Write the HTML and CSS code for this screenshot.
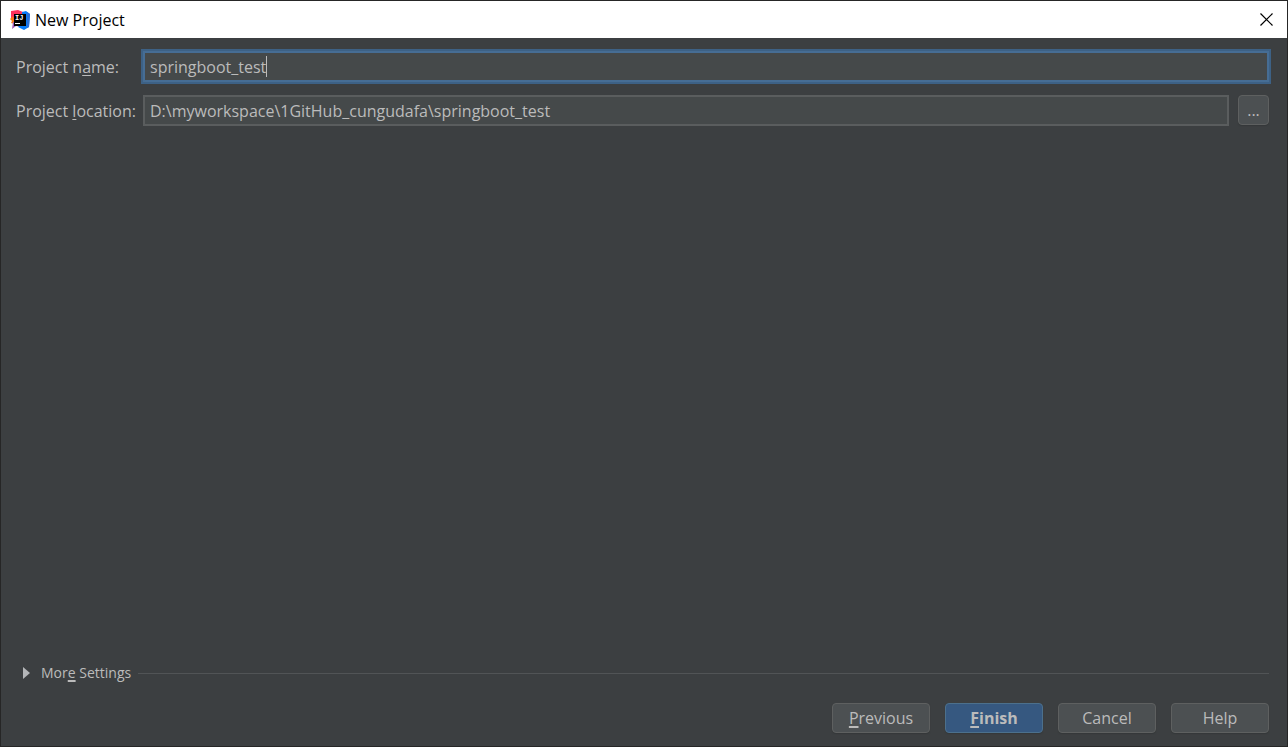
FILE: index.html
```html
<!DOCTYPE html>
<html lang="en">
<head>
<meta charset="utf-8">
<title>New Project</title>
<link rel="stylesheet" href="styles.css">
</head>
<body>
<main class="dialog">
  <header class="titlebar">
    <svg class="logo" viewBox="0 0 20 20" aria-hidden="true">
      <path d="M1 1L8 0L13 2L11 8L3 12L1 8Z" fill="#fe315d"/>
      <path d="M0 9L3 6L5 14L1 13L2 11Z" fill="#f97a12"/>
      <path d="M3 12L10 11L11 17L6 16L2 19Z" fill="#a05bb5"/>
      <path d="M12 2L16 1L20 4L19 17L14 20L8 17L12 12Z" fill="#087cfa"/>
      <path d="M17 2L20 4L19 17L17 18Z" fill="#2a6fd8"/>
      <rect x="4" y="4" width="12" height="12" fill="#000"/>
      <text class="logo-text" x="5" y="10">IJ</text>
      <rect x="5" y="13" width="5" height="1" fill="#fff"/>
    </svg>
    <h1 class="title">New Project</h1>
    <button class="close" type="button" aria-label="Close">
      <svg class="close-icon" viewBox="0 0 13 13" aria-hidden="true"><path d="M.5.5L12.5 12.5M12.5.5L.5 12.5" stroke="#000" stroke-width="1.2" fill="none"/></svg>
    </button>
  </header>
  <form class="content">
    <div class="fields">
      <label for="name">Project n<u>a</u>me:</label>
      <div class="name-wrap">
        <input class="field field-active" id="name" type="text" value="springboot_test" spellcheck="false">
        <span class="caret"></span>
      </div>
      <label for="location">Project <u>l</u>ocation:</label>
      <div class="location-row">
        <input class="field" id="location" type="text" value="D:\myworkspace\1GitHub_cungudafa\springboot_test" spellcheck="false">
        <button class="button browse" type="button" aria-label="Browse">...</button>
      </div>
    </div>
    <div class="more">
      <button class="more-toggle" type="button" aria-expanded="false">
        <svg class="arrow" viewBox="0 0 7 12" aria-hidden="true"><path d="M0 0L7 6L0 12Z" fill="#b4b6b8"/></svg>
        <span>Mor<u>e</u> Settings</span>
      </button>
      <span class="rule"></span>
    </div>
    <footer class="actions">
      <button class="button action" type="button"><span><u>P</u>revious</span></button>
      <button class="button action primary" type="submit"><span><u>F</u>inish</span></button>
      <button class="button action" type="button">Cancel</button>
      <button class="button action" type="button">Help</button>
    </footer>
  </form>
</main>
</body>
</html>
```
FILE: styles.css
```css
* { box-sizing: border-box; }
body {
  margin: 0;
  background: #3c3f41;
  color: #bbbbbb;
  font: 16px/20px "Open Sans", "Noto Sans", sans-serif;
}
button, input { font: inherit; color: inherit; margin: 0; }
u { text-decoration-thickness: 1px; text-underline-offset: 2px; text-decoration-skip-ink: none; }
.dialog {
  display: flex;
  flex-direction: column;
  min-height: 100vh;
  border: 1px solid #262626;
}
.titlebar {
  display: flex;
  align-items: center;
  height: 37px;
  padding: 0 8px 0 9px;
  background: #fff;
  color: #000;
}
.logo { width: 20px; height: 20px; margin-right: 5px; }
.logo-text { font: bold 7px "Liberation Mono", monospace; fill: #fff; }
.title { flex: 1; margin: 0; font-size: 16px; font-weight: 400; }
.close {
  display: flex;
  padding: 6px;
  border: 0;
  background: none;
}
.close-icon { width: 13px; height: 13px; }
.content {
  flex: 1;
  display: flex;
  flex-direction: column;
  padding: 13px 18px 13px 15px;
}
.fields {
  display: grid;
  grid-template-columns: 120px 1fr;
  gap: 13px 7px;
  align-items: center;
}
.fields label { white-space: nowrap; }
.name-wrap { position: relative; display: flex; }
.location-row { display: flex; gap: 9px; }
.field {
  flex: 1;
  min-width: 0;
  height: 31px;
  padding: 0 5px;
  border: 2px solid #5a5d5e;
  background: #45494a;
  outline: 0;
}
.field-active {
  border-color: #466d94;
  box-shadow: 0 0 0 2px #3d6185;
}
.caret {
  position: absolute;
  left: 123px;
  top: 5px;
  width: 1px;
  height: 21px;
  background: #bbbbbb;
}
.button {
  height: 30px;
  padding: 0;
  border: 1px solid #5e6060;
  border-radius: 4px;
  background: #4c5052;
  box-shadow: 0 1px 1px #35383a;
}
.browse { width: 31px; }
.more {
  display: flex;
  align-items: center;
  gap: 7px;
  margin-top: auto;
}
.more-toggle {
  display: flex;
  align-items: center;
  gap: 11px;
  padding: 0 0 0 7px;
  border: 0;
  background: none;
  font-size: 14px;
}
.more-toggle u { text-decoration-thickness: 2px; }
.arrow { width: 7px; height: 12px; }
.rule { flex: 1; height: 1px; background: #515456; }
.actions {
  display: flex;
  justify-content: flex-end;
  gap: 15px;
  margin-top: 20px;
}
.action { width: 98px; }
.action u { text-decoration-thickness: 2px; }
.primary {
  border-color: #4c708c;
  background: #365880;
  font-weight: 700;
}
```
